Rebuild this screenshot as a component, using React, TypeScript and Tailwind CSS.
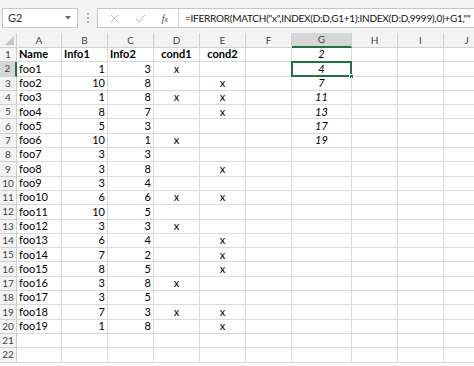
import React from "react";

// column headers with widths in px
const COLS = [
  { key: "A", w: "w-[45px]" },
  { key: "B", w: "w-[46px]" },
  { key: "C", w: "w-[46px]" },
  { key: "D", w: "w-[46px]" },
  { key: "E", w: "w-[46px]" },
  { key: "F", w: "w-[46px]" },
  { key: "G", w: "w-[60px]" },
  { key: "H", w: "w-[46px]" },
  { key: "I", w: "w-[46px]" },
  { key: "J", w: "w-[46px]" },
];

type Row = [string, number, number, boolean, boolean];

const DATA: Row[] = [
  ["foo1", 1, 3, true, false],
  ["foo2", 10, 8, false, true],
  ["foo3", 1, 8, true, true],
  ["foo4", 8, 7, false, true],
  ["foo5", 5, 3, false, false],
  ["foo6", 10, 1, true, false],
  ["foo7", 3, 3, false, false],
  ["foo8", 3, 8, false, true],
  ["foo9", 3, 4, false, false],
  ["foo10", 6, 6, true, true],
  ["foo11", 10, 5, false, false],
  ["foo12", 3, 3, true, false],
  ["foo13", 6, 4, false, true],
  ["foo14", 7, 2, false, true],
  ["foo15", 8, 5, false, true],
  ["foo16", 3, 8, true, false],
  ["foo17", 3, 5, false, false],
  ["foo18", 7, 3, true, true],
  ["foo19", 1, 8, false, true],
];

const G_VALUES = ["2", "4", "7", "11", "13", "17", "19"];

const cell = "h-full shrink-0 border-r border-b border-[#dadada] flex items-center px-[2px] overflow-visible whitespace-nowrap";

function FormulaBar() {
  return (
    <div className="h-[33px] bg-[#f3f3f3] pt-[8px] flex flex-col">
      <div className="h-[20px] flex items-stretch">
        <div className="ml-[2px] w-[76px] shrink-0 bg-white border border-[#c6c6c6] flex items-center justify-between pl-[5px] pr-[6px]">
          <span className="text-[11px] text-[#333]">G2</span>
          <svg width="6" height="4" viewBox="0 0 6 4">
            <path d="M0 0 L6 0 L3 3.5 Z" fill="#666" />
          </svg>
        </div>
        <div className="w-[19px] shrink-0 flex flex-col items-center justify-center gap-[2px]">
          <span className="w-[2px] h-[2px] bg-[#b5b5b5]" />
          <span className="w-[2px] h-[2px] bg-[#b5b5b5]" />
          <span className="w-[2px] h-[2px] bg-[#b5b5b5]" />
        </div>
        <div className="flex-1 min-w-0 bg-white border border-[#c6c6c6] border-r-0 flex items-center">
          <div className="w-[80px] shrink-0 flex items-center justify-around pl-[4px] pr-[2px]">
            <svg width="9" height="9" viewBox="0 0 9 9">
              <path d="M1 1 L8 8 M8 1 L1 8" stroke="#b8b8b8" strokeWidth="1" />
            </svg>
            <svg width="11" height="9" viewBox="0 0 11 9">
              <path d="M1 5 L4 8 L10 1" stroke="#b8b8b8" strokeWidth="1" fill="none" />
            </svg>
            <span className="text-[11px] italic text-[#555] font-['Liberation_Serif',serif]">
              f<span className="text-[8px]">x</span>
            </span>
          </div>
          <div className="h-full min-w-0 border-l border-[#d4d4d4] pl-[6px] flex items-center text-[10px] tracking-[-0.25px] text-[#111] whitespace-nowrap">
            =IFERROR(MATCH("x",INDEX(D:D,G1+1):INDEX(D:D,9999),0)+G1,""
          </div>
        </div>
      </div>
    </div>
  );
}

function HeaderRow() {
  return (
    <div className="h-[15px] flex bg-[#f3f3f3]">
      <div className="w-[17px] shrink-0 h-full border-r border-b border-[#cfcfcf] relative">
        <svg className="absolute right-[2px] bottom-[2px]" width="9" height="9" viewBox="0 0 9 9">
          <path d="M9 0 L9 9 L0 9 Z" fill="#c4c4c4" />
        </svg>
      </div>
      {COLS.map((c) => (
        <div
          key={c.key}
          className={`${c.w} shrink-0 h-full border-r flex items-center justify-center text-[10px] text-[#444] ${
            c.key === "G"
              ? "bg-[#d6d6d6] border-b-2 border-b-[#217346] border-r-[#cfcfcf]"
              : "border-b border-[#cfcfcf]"
          }`}
        >
          {c.key}
        </div>
      ))}
    </div>
  );
}

function RowHeader({ n }: { n: number }) {
  const sel = n === 2;
  return (
    <div
      className={`w-[17px] shrink-0 h-full border-b flex items-center justify-center text-[10px] text-[#444] ${
        sel ? "bg-[#d6d6d6] border-r-2 border-r-[#217346] border-b-[#cfcfcf]" : "bg-[#f3f3f3] border-r border-[#cfcfcf]"
      }`}
    >
      {n}
    </div>
  );
}

export default function App() {
  const rows: React.ReactNode[] = [];
  for (let r = 1; r <= 22; r++) {
    const d = r >= 2 && r <= 20 ? DATA[r - 2] : null;
    const g = G_VALUES[r - 1];
    rows.push(
      <div key={r} className="h-[14.3px] flex text-[11px] text-black">
        <RowHeader n={r} />
        {r === 1 ? (
          <>
            <div className={`${cell} w-[45px] font-bold`}>Name</div>
            <div className={`${cell} w-[46px] font-bold`}>Info1</div>
            <div className={`${cell} w-[46px] font-bold`}>Info2</div>
            <div className={`${cell} w-[46px] font-bold justify-center`}>cond1</div>
            <div className={`${cell} w-[46px] font-bold justify-center`}>cond2</div>
          </>
        ) : d ? (
          <>
            <div className={`${cell} w-[45px]`}>{d[0]}</div>
            <div className={`${cell} w-[46px] justify-end`}>{d[1]}</div>
            <div className={`${cell} w-[46px] justify-end`}>{d[2]}</div>
            <div className={`${cell} w-[46px] justify-center`}>{d[3] ? "x" : ""}</div>
            <div className={`${cell} w-[46px] justify-center`}>{d[4] ? "x" : ""}</div>
          </>
        ) : (
          <>
            <div className={`${cell} w-[45px]`} />
            <div className={`${cell} w-[46px]`} />
            <div className={`${cell} w-[46px]`} />
            <div className={`${cell} w-[46px]`} />
            <div className={`${cell} w-[46px]`} />
          </>
        )}
        <div className={`${cell} w-[46px]`} />
        <div className={`${cell} w-[60px] justify-center italic relative`}>
          {g ?? ""}
          {r === 2 && (
            <>
              <div className="absolute left-[-1px] top-[-1px] right-[-1px] bottom-[-1px] border-2 border-[#217346] pointer-events-none" />
              <div className="absolute right-[-3px] bottom-[-3px] w-[5px] h-[5px] bg-[#217346] border border-white" />
            </>
          )}
        </div>
        <div className={`${cell} w-[46px]`} />
        <div className={`${cell} w-[46px]`} />
        <div className={`${cell} w-[46px]`} />
      </div>
    );
  }

  return (
    <div className="w-[474px] h-[366px] overflow-hidden bg-white font-['Lato','Open_Sans',sans-serif]">
      <FormulaBar />
      <HeaderRow />
      {rows}
    </div>
  );
}
